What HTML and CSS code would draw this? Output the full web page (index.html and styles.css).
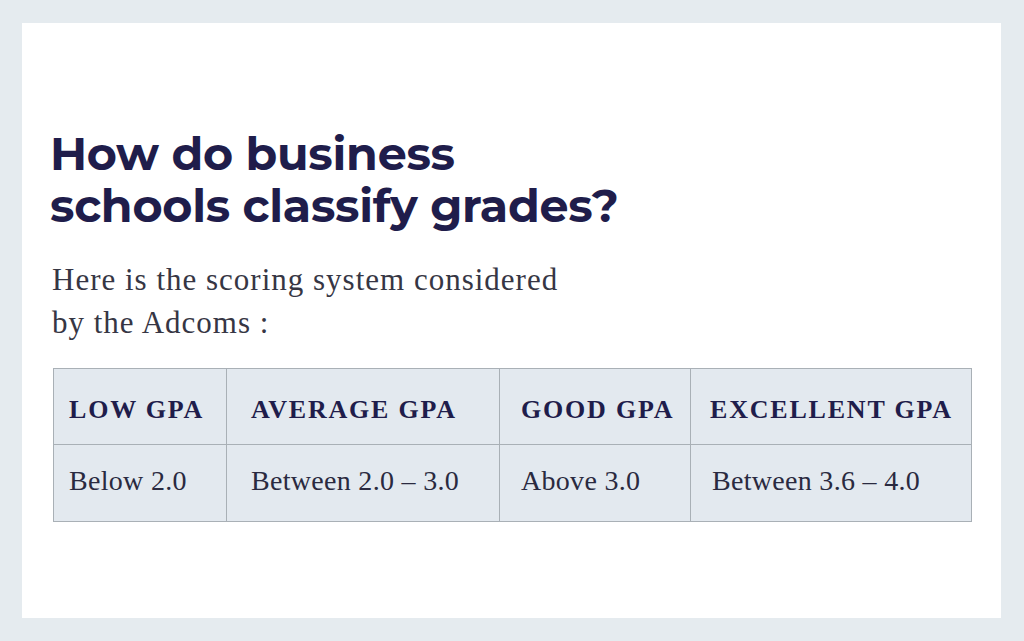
FILE: index.html
```html
<!DOCTYPE html>
<html>
<head>
<meta charset="utf-8">
<link rel="stylesheet" href="styles.css">
</head>
<body>
<main class="card">
  <h1 class="title">How do business<br>schools classify grades?</h1>
  <p class="intro">Here is the scoring system considered<br>by the Adcoms :</p>
  <table class="gpa">
    <colgroup>
      <col class="c1"><col class="c2"><col class="c3"><col class="c4">
    </colgroup>
    <thead>
      <tr>
        <th class="p1">LOW GPA</th>
        <th class="p2">AVERAGE GPA</th>
        <th class="p3">GOOD GPA</th>
        <th class="p4">EXCELLENT GPA</th>
      </tr>
    </thead>
    <tbody>
      <tr>
        <td class="p1">Below 2.0</td>
        <td class="p2">Between 2.0 – 3.0</td>
        <td class="p3">Above 3.0</td>
        <td class="p4 p4b">Between 3.6 – 4.0</td>
      </tr>
    </tbody>
  </table>
</main>
</body>
</html>
```
FILE: styles.css
```css
html, body {
  margin: 0;
  padding: 0;
}
body {
  background: #e5ebef;
  width: 1024px;
  height: 641px;
  padding: 23px 0 0 22px;
  box-sizing: border-box;
}
.card {
  background: #ffffff;
  width: 979px;
  height: 595px;
  box-sizing: border-box;
  padding: 105px 0 0 28px;
}
.title {
  margin: 0;
  font-family: "Montserrat", "Open Sans", "Inter", sans-serif;
  font-weight: 700;
  font-size: 46px;
  line-height: 52px;
  color: #1f1d4b;
  letter-spacing: -0.3px;
}
.intro {
  margin: 26px 0 0 2px;
  font-family: "Liberation Serif", serif;
  font-size: 31px;
  line-height: 43px;
  letter-spacing: 1px;
  color: #363644;
}
.gpa {
  margin: 24px 0 0 3px;
  border-collapse: collapse;
  table-layout: fixed;
  width: 918px;
  background: #e3e9ef;
  font-family: "Liberation Serif", serif;
  color: #1f1d4b;
}
.c1 { width: 173px; }
.c2 { width: 273px; }
.c3 { width: 191px; }
.c4 { width: 281px; }
.gpa th, .gpa td {
  border: 1px solid #a9b0b6;
  text-align: left;
  padding: 0;
  white-space: nowrap;
  vertical-align: middle;
}
.gpa th {
  height: 76px;
  box-sizing: border-box;
  padding-top: 6px;
  font-size: 26px;
  font-weight: 700;
  letter-spacing: 1.8px;
}
.gpa td {
  height: 77px;
  box-sizing: border-box;
  padding-bottom: 4px;
  font-size: 28px;
  font-weight: 400;
  letter-spacing: 0.3px;
  color: #2a2a40;
}
.p1 { padding-left: 15px !important; }
.p2 { padding-left: 24px !important; }
.p3 { padding-left: 21px !important; }
.p4 { padding-left: 19px !important; }
.p4b { padding-left: 21px !important; }
```
